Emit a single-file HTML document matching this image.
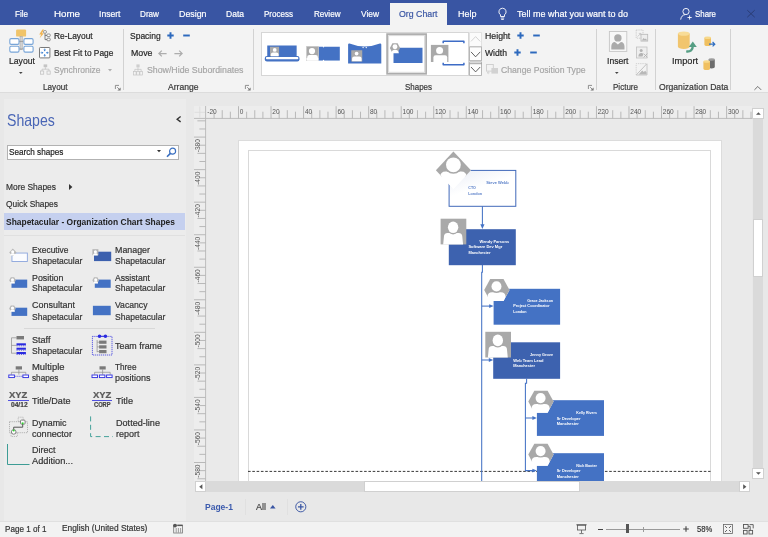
<!DOCTYPE html>
<html><head><meta charset="utf-8"><title>Visio</title>
<style>
html,body{margin:0;padding:0;}
body{width:768px;height:537px;overflow:hidden;position:relative;background:#e8e8e8;font-family:"Liberation Sans",sans-serif;}
.t{position:absolute;white-space:nowrap;font-family:"Liberation Sans",sans-serif;-webkit-text-stroke:0.2px;}
.a{position:absolute;}
svg{position:absolute;overflow:visible;}
</style></head><body>
<div id="root" style="position:absolute;left:0;top:0;width:768px;height:537px;will-change:transform;">

<div class="a" style="left:0;top:0;width:768px;height:25px;background:#3955a3;"></div>
<div class="a" style="left:390px;top:3px;width:57px;height:22px;background:#f3f3f3;"></div>
<span class="t " style="left:15.00px;top:7.80px;font-size:9.5px;line-height:11.40px;color:#ffffff;font-weight:normal;transform:scaleX(0.8493);transform-origin:0 0;">File</span>
<span class="t " style="left:54.00px;top:7.80px;font-size:9.5px;line-height:11.40px;color:#ffffff;font-weight:normal;transform:scaleX(1.0261);transform-origin:0 0;">Home</span>
<span class="t " style="left:98.50px;top:7.80px;font-size:9.5px;line-height:11.40px;color:#ffffff;font-weight:normal;transform:scaleX(0.9050);transform-origin:0 0;">Insert</span>
<span class="t " style="left:140.00px;top:7.80px;font-size:9.5px;line-height:11.40px;color:#ffffff;font-weight:normal;transform:scaleX(0.8571);transform-origin:0 0;">Draw</span>
<span class="t " style="left:179.00px;top:7.80px;font-size:9.5px;line-height:11.40px;color:#ffffff;font-weight:normal;transform:scaleX(0.9300);transform-origin:0 0;">Design</span>
<span class="t " style="left:226.00px;top:7.80px;font-size:9.5px;line-height:11.40px;color:#ffffff;font-weight:normal;transform:scaleX(0.8970);transform-origin:0 0;">Data</span>
<span class="t " style="left:264.00px;top:7.80px;font-size:9.5px;line-height:11.40px;color:#ffffff;font-weight:normal;transform:scaleX(0.8451);transform-origin:0 0;">Process</span>
<span class="t " style="left:313.50px;top:7.80px;font-size:9.5px;line-height:11.40px;color:#ffffff;font-weight:normal;transform:scaleX(0.8508);transform-origin:0 0;">Review</span>
<span class="t " style="left:361.00px;top:7.80px;font-size:9.5px;line-height:11.40px;color:#ffffff;font-weight:normal;transform:scaleX(0.8815);transform-origin:0 0;">View</span>
<span class="t " style="left:399.00px;top:7.80px;font-size:9.5px;line-height:11.40px;color:#3955a3;font-weight:normal;transform:scaleX(0.9232);transform-origin:0 0;">Org Chart</span>
<span class="t " style="left:457.50px;top:7.80px;font-size:9.5px;line-height:11.40px;color:#ffffff;font-weight:normal;transform:scaleX(0.9469);transform-origin:0 0;">Help</span>
<span class="t " style="left:517.00px;top:7.80px;font-size:9.5px;line-height:11.40px;color:#ffffff;font-weight:normal;transform:scaleX(0.9469);transform-origin:0 0;">Tell me what you want to do</span>
<span class="t " style="left:695.00px;top:7.80px;font-size:9.5px;line-height:11.40px;color:#ffffff;font-weight:normal;transform:scaleX(0.8284);transform-origin:0 0;">Share</span>
<svg style="left:497.3px;top:6.9px" width="11" height="15" viewBox="0 0 11 15"><path d="M5.5 1.2a3.6 3.6 0 0 0-2 6.6v1.7h4V7.8a3.6 3.6 0 0 0-2-6.6z" fill="none" stroke="#fff" stroke-width="0.9"/><path d="M3.8 11h3.4M4.2 12.4h2.6" stroke="#fff" stroke-width="0.9"/></svg>
<svg style="left:679px;top:7px" width="13" height="13" viewBox="0 0 13 13"><circle cx="7" cy="4.5" r="3.1" fill="none" stroke="#fff" stroke-width="0.9"/><path d="M1.7 12.6c0.3-2.9 2-4.7 4.4-5" fill="none" stroke="#fff" stroke-width="0.9"/><path d="M10.6 8.4v4.2M8.5 10.5h4.2" stroke="#fff" stroke-width="0.9"/></svg>
<svg style="left:746.7px;top:10px" width="8" height="7.4" viewBox="0 0 8 7.4"><path d="M0.3 0.2l7.4 7M7.7 0.2l-7.4 7" stroke="#2a3c74" stroke-width="1"/></svg>
<div class="a" style="left:0;top:25px;width:768px;height:68.4px;background:#f3f3f3;border-bottom:1px solid #dcdcdc;box-sizing:border-box;"></div>
<div class="a" style="left:122.5px;top:29px;width:1px;height:61px;background:#d2d2d2;"></div>
<div class="a" style="left:252.5px;top:29px;width:1px;height:61px;background:#d2d2d2;"></div>
<div class="a" style="left:596.0px;top:29px;width:1px;height:61px;background:#d2d2d2;"></div>
<div class="a" style="left:655.0px;top:29px;width:1px;height:61px;background:#d2d2d2;"></div>
<div class="a" style="left:729.5px;top:29px;width:1px;height:61px;background:#d2d2d2;"></div>
<svg style="left:8px;top:28px" width="27" height="26" viewBox="0 0 27 26"><rect x="8.1" y="1.4" width="10" height="7.2" rx="1.2" fill="#f0c46a"/><rect x="12.0" y="8.6" width="2.2" height="12.8" fill="#d4d4d4" stroke="#9a9a9a" stroke-width="0.5"/><path d="M11 13.4h4.4M11 21h4.4" stroke="#8a8a8a" stroke-width="0.7" fill="none"/><rect x="1.8" y="10.6" width="9.2" height="5.8" rx="1.3" fill="#fff" stroke="#78a5d8" stroke-width="1.1"/><rect x="15.9" y="10.6" width="9.2" height="5.8" rx="1.3" fill="#fff" stroke="#78a5d8" stroke-width="1.1"/><rect x="1.8" y="18.3" width="9.2" height="5.8" rx="1.3" fill="#fff" stroke="#78a5d8" stroke-width="1.1"/><rect x="15.9" y="18.3" width="9.2" height="5.8" rx="1.3" fill="#fff" stroke="#78a5d8" stroke-width="1.1"/></svg>
<span class="t " style="left:8.60px;top:55.02px;font-size:9.8px;line-height:11.76px;color:#262626;font-weight:normal;transform:scaleX(0.8803);transform-origin:0 0;">Layout</span>
<svg style="left:19.2px;top:71.6px" width="3.6" height="2.2"><path d="M0 0h3.6l-1.8 2.1z" fill="#444"/></svg>
<svg style="left:39px;top:30px" width="12" height="12" viewBox="0 0 12 12"><path d="M3.4 -0.6L0.2 4.6h2L0.6 8.2 5 3.2H3L5 -0.6z" fill="#f2b552"/><path d="M6 3.4v6.2h2M6 5.4h2" stroke="#666" stroke-width="0.8" fill="none"/><rect x="4.6" y="0.6" width="2.8" height="2.6" rx="1" fill="#fff" stroke="#666" stroke-width="0.7"/><rect x="8" y="4" width="3.2" height="2.6" rx="0.8" fill="#fff" stroke="#666" stroke-width="0.7"/><rect x="8" y="8.2" width="3.2" height="2.6" rx="0.8" fill="#fff" stroke="#666" stroke-width="0.7"/></svg>
<span class="t " style="left:53.75px;top:30.30px;font-size:9.5px;line-height:11.40px;color:#262626;font-weight:normal;transform:scaleX(0.8830);transform-origin:0 0;">Re-Layout</span>
<svg style="left:39px;top:46.5px" width="11.4" height="11.4" viewBox="0 0 11.4 11.4"><rect x="0.5" y="0.5" width="10.4" height="10.4" rx="0.8" fill="#fff" stroke="#6a6a6a" stroke-width="0.9"/><path d="M5.7 1.4v2.6M5.7 10v-2.6M1.4 5.7h2.6M10 5.7H7.4" stroke="#6aa2dc" stroke-width="0.7"/><path d="M4.5 2.6h2.4L5.7 4.5zM4.5 8.8h2.4L5.7 6.9zM2.6 4.5v2.4L4.5 5.7zM8.8 4.5v2.4L6.9 5.7z" fill="#3b7fd0"/></svg>
<span class="t " style="left:53.75px;top:47.30px;font-size:9.5px;line-height:11.40px;color:#262626;font-weight:normal;transform:scaleX(0.8774);transform-origin:0 0;">Best Fit to Page</span>
<svg style="left:39.5px;top:64px" width="11" height="11" viewBox="0 0 11 11"><rect x="3.6" y="0.4" width="3.6" height="2.8" fill="#c4c4c4"/><path d="M5.4 3.2v2M2 7V5.2h7V7" stroke="#c4c4c4" stroke-width="0.8" fill="none"/><rect x="0.5" y="7" width="3.2" height="3.2" fill="none" stroke="#c4c4c4" stroke-width="0.8"/><rect x="7" y="7" width="3.2" height="3.2" fill="none" stroke="#c4c4c4" stroke-width="0.8"/></svg>
<span class="t " style="left:53.75px;top:64.30px;font-size:9.5px;line-height:11.40px;color:#a6a6a6;font-weight:normal;transform:scaleX(0.8895);transform-origin:0 0;">Synchronize</span>
<svg style="left:107.5px;top:69px" width="4" height="3"><path d="M0 0h4l-2 2.5z" fill="#b0b0b0"/></svg>
<span class="t " style="left:43.00px;top:81.60px;font-size:9px;line-height:10.80px;color:#383838;font-weight:normal;transform:scaleX(0.9067);transform-origin:0 0;">Layout</span>
<svg style="left:115px;top:85px" width="6" height="6" viewBox="0 0 6 6"><path d="M0.4 4V0.4H4" stroke="#777" stroke-width="0.8" fill="none"/><path d="M5.6 2.4v3.2H2.4z" fill="#777"/><path d="M2.2 2.2l2.6 2.6" stroke="#777" stroke-width="0.8"/></svg>
<span class="t " style="left:130.00px;top:30.30px;font-size:9.5px;line-height:11.40px;color:#262626;font-weight:normal;transform:scaleX(0.8943);transform-origin:0 0;">Spacing</span>
<svg style="left:167px;top:32.1px" width="7" height="7" viewBox="0 0 7 7"><path d="M3.5 0.3v6.4M0.3 3.5h6.4" stroke="#2d69bd" stroke-width="1.95"/></svg>
<svg style="left:183px;top:32.1px" width="7" height="7" viewBox="0 0 7 7"><path d="M0.2 3.5h6.6" stroke="#2d69bd" stroke-width="1.95"/></svg>
<span class="t " style="left:130.50px;top:47.30px;font-size:9.5px;line-height:11.40px;color:#262626;font-weight:normal;transform:scaleX(0.9256);transform-origin:0 0;">Move</span>
<svg style="left:157.5px;top:49.5px" width="9" height="7" viewBox="0 0 9 7"><path d="M8.6 3.5H1M3.8 0.6L0.9 3.5l2.9 2.9" stroke="#adadad" stroke-width="1.25" fill="none"/></svg>
<svg style="left:174px;top:49.5px" width="9" height="7" viewBox="0 0 9 7"><path d="M0.4 3.5H8M5.2 0.6l2.9 2.9-2.9 2.9" stroke="#adadad" stroke-width="1.25" fill="none"/></svg>
<svg style="left:132.5px;top:63.5px" width="10" height="12" viewBox="0 0 10 12"><rect x="3.4" y="0.4" width="3.2" height="3" fill="#cfcfcf"/><path d="M5 3.4v2M1.8 7.4V5.4h6.4v2M5 5.4v2" stroke="#c4c4c4" stroke-width="0.7" fill="none"/><rect x="0.5" y="7.4" width="2.6" height="3.6" fill="none" stroke="#c4c4c4" stroke-width="0.7"/><rect x="3.7" y="7.4" width="2.6" height="3.6" fill="none" stroke="#c4c4c4" stroke-width="0.7"/><rect x="6.9" y="7.4" width="2.6" height="3.6" fill="none" stroke="#c4c4c4" stroke-width="0.7"/></svg>
<span class="t " style="left:146.50px;top:64.30px;font-size:9.5px;line-height:11.40px;color:#a6a6a6;font-weight:normal;transform:scaleX(0.9229);transform-origin:0 0;">Show/Hide Subordinates</span>
<span class="t " style="left:167.50px;top:81.60px;font-size:9px;line-height:10.80px;color:#383838;font-weight:normal;transform:scaleX(0.9526);transform-origin:0 0;">Arrange</span>
<svg style="left:245px;top:85px" width="6" height="6" viewBox="0 0 6 6"><path d="M0.4 4V0.4H4" stroke="#777" stroke-width="0.8" fill="none"/><path d="M5.6 2.4v3.2H2.4z" fill="#777"/><path d="M2.2 2.2l2.6 2.6" stroke="#777" stroke-width="0.8"/></svg>
<div class="a" style="left:260.8px;top:32px;width:208.6px;height:44px;background:#fff;border:1px solid #d6d6d6;box-sizing:border-box;"></div>
<svg style="left:256px;top:28px" width="230" height="52" viewBox="256 28 230 52"><rect x="267.25" y="45.5" width="29.4" height="10.8" fill="#4472c4"/><rect x="264.8" y="55.9" width="34.7" height="5.6" rx="2.2" fill="#4472c4"/><rect x="266" y="57" width="32.3" height="2.3" rx="0.8" fill="#fff"/><rect x="270" y="46.75" width="9.1" height="9.4" fill="#a9a9a9"/><circle cx="274.7" cy="49.9" r="1.9" fill="#fff"/><path d="M270.8 56.15V54.6Q270.8 52.4 273.0 52.4H276.40000000000003Q278.6 52.4 278.6 54.6V56.15z" fill="#fff"/><rect x="318.3" y="46.75" width="21.5" height="13.8" fill="#4472c4"/><rect x="306.6" y="46.5" width="11.9" height="14.25" fill="#fff" stroke="#cfcfcf" stroke-width="0.5"/><rect x="306.6" y="46.5" width="11.9" height="11.5" fill="#a9a9a9"/><circle cx="312" cy="51.1" r="3.1" fill="#fff"/><path d="M307.2 60.4V57.1Q307.2 54.9 309.4 54.9H315.7Q317.9 54.9 317.9 57.1V60.4z" fill="#fff"/><circle cx="323.5" cy="46.75" r="0.7" fill="#fff"/><circle cx="323.5" cy="60.4" r="0.7" fill="#fff"/><path d="M348.1 44.6Q348.1 43.2 349.5 43.4Q364.7 49.4 379.9 43.4Q381.3 43.2 381.3 44.6V63.6H348.1z" fill="#4472c4"/><rect x="351.25" y="50.25" width="11" height="11.25" fill="#a9a9a9"/><circle cx="356.6" cy="53.6" r="1.85" fill="#fff"/><path d="M352.1 61.2V58.800000000000004Q352.1 56.6 354.3 56.6H359.40000000000003Q361.6 56.6 361.6 58.800000000000004V61.2z" fill="#fff"/><circle cx="363.1" cy="47.5" r="0.65" fill="#fff"/><circle cx="366.25" cy="47.5" r="0.65" fill="#fff"/><rect x="387.1" y="34.1" width="39" height="39.7" fill="#fff" stroke="#acacac" stroke-width="1.7"/><rect x="388.6" y="35.6" width="36" height="36.7" fill="none" stroke="#dadada" stroke-width="1"/><rect x="393.5" y="47.75" width="29" height="15.25" fill="#4472c4"/><path d="M392.4 43.3h5.2l2.5 4.6-2.5 5H392.4l-2.5-5z" fill="#a9a9a9"/><circle cx="395" cy="46.8" r="2.45" fill="#fff"/><path d="M391.6 53.2c0-2.8 1.4-3.4 3.4-3.4s3.6 0.6 3.9 3.4z" fill="#fff"/><rect x="430.9" y="44.9" width="17.5" height="17.1" fill="#a9a9a9"/><circle cx="439.6" cy="50.5" r="3.5" fill="#fff"/><path d="M433.4 62.3V57.5Q433.4 55.3 435.59999999999997 55.3H445.0Q447.2 55.3 447.2 57.5V62.3z" fill="#fff"/><path d="M443.2 43.3v-2h20.7v2M443.2 62.8v2h20.7v-2" fill="none" stroke="#3d6cc6" stroke-width="1.5" stroke-linejoin="round"/><rect x="469.6" y="32.6" width="11.9" height="14" fill="#fbfbfb" stroke="#dcdcdc" stroke-width="0.8"/><rect x="469.6" y="46.9" width="11.9" height="13.8" fill="#fdfdfd" stroke="#a6a6a6" stroke-width="0.8"/><rect x="469.6" y="62" width="11.9" height="13.4" fill="#fdfdfd" stroke="#a6a6a6" stroke-width="0.8"/><path d="M471 41.4l4.6-4.8 4.6 4.8" stroke="#c9c9c9" stroke-width="0.8" fill="none"/><path d="M471 51.9l4.6 4.9 4.6-4.9" stroke="#444" stroke-width="0.85" fill="none"/><path d="M469.6 63.7h11.9" stroke="#8a8a8a" stroke-width="0.8"/><path d="M471 67l4.6 4.9 4.6-4.9" stroke="#444" stroke-width="0.85" fill="none"/></svg>
<span class="t " style="left:484.75px;top:30.30px;font-size:9.5px;line-height:11.40px;color:#262626;font-weight:normal;transform:scaleX(0.9214);transform-origin:0 0;">Height</span>
<svg style="left:516.5px;top:32.1px" width="7" height="7" viewBox="0 0 7 7"><path d="M3.5 0.3v6.4M0.3 3.5h6.4" stroke="#2d69bd" stroke-width="1.95"/></svg>
<svg style="left:533px;top:32.1px" width="7" height="7" viewBox="0 0 7 7"><path d="M0.2 3.5h6.6" stroke="#2d69bd" stroke-width="1.95"/></svg>
<span class="t " style="left:485.00px;top:47.30px;font-size:9.5px;line-height:11.40px;color:#262626;font-weight:normal;transform:scaleX(0.9060);transform-origin:0 0;">Width</span>
<svg style="left:513.5px;top:49.1px" width="7" height="7" viewBox="0 0 7 7"><path d="M3.5 0.3v6.4M0.3 3.5h6.4" stroke="#2d69bd" stroke-width="1.95"/></svg>
<svg style="left:530px;top:49.1px" width="7" height="7" viewBox="0 0 7 7"><path d="M0.2 3.5h6.6" stroke="#2d69bd" stroke-width="1.95"/></svg>
<svg style="left:486px;top:64px" width="13" height="11" viewBox="0 0 13 11"><rect x="0.5" y="0.5" width="6.8" height="6.6" fill="none" stroke="#cdcdcd" stroke-width="0.9"/><rect x="5.4" y="4" width="6.6" height="5.6" fill="#d2d2d2"/><path d="M3.6 8.8H1.4M2.6 7.8l-1.2 1 1.2 1" stroke="#c8c8c8" stroke-width="0.7" fill="none"/></svg>
<span class="t " style="left:501.00px;top:64.30px;font-size:9.5px;line-height:11.40px;color:#a6a6a6;font-weight:normal;transform:scaleX(0.9108);transform-origin:0 0;">Change Position Type</span>
<span class="t " style="left:405.00px;top:81.60px;font-size:9px;line-height:10.80px;color:#383838;font-weight:normal;transform:scaleX(0.8846);transform-origin:0 0;">Shapes</span>
<svg style="left:588px;top:85px" width="6" height="6" viewBox="0 0 6 6"><path d="M0.4 4V0.4H4" stroke="#777" stroke-width="0.8" fill="none"/><path d="M5.6 2.4v3.2H2.4z" fill="#777"/><path d="M2.2 2.2l2.6 2.6" stroke="#777" stroke-width="0.8"/></svg>
<svg style="left:608px;top:30px" width="21" height="23" viewBox="608 30 21 23"><rect x="609.4" y="31.5" width="17.4" height="19.9" fill="#f7f7f7" stroke="#c6c6c6" stroke-width="0.9"/><circle cx="617.9" cy="37.9" r="3.7" fill="#ababab"/><path d="M611.3 49.6v-3.2c0-2.6 1.4-4.3 3.6-4.4l3 2.4 3-2.4c2.2 0.1 3.6 1.8 3.6 4.4v3.2z" fill="#ababab"/></svg>
<span class="t " style="left:606.50px;top:55.02px;font-size:9.8px;line-height:11.76px;color:#262626;font-weight:normal;transform:scaleX(0.8773);transform-origin:0 0;">Insert</span>
<svg style="left:615.4px;top:71.6px" width="3.6" height="2.2"><path d="M0 0h3.6l-1.8 2.1z" fill="#444"/></svg>
<svg style="left:634px;top:28px" width="16" height="50" viewBox="634 28 16 50"><rect x="636.2" y="30" width="6.8" height="8.2" fill="none" stroke="#bdbdbd" stroke-width="0.7" stroke-dasharray="1.3 0.9"/><path d="M637.6 36.6l3-3M640.8 35.4v-2h-2" stroke="#bdbdbd" stroke-width="0.7" fill="none"/><rect x="641" y="34.3" width="6.7" height="6.8" fill="#ededed" stroke="#b8b8b8" stroke-width="0.8"/><path d="M641.8 40.4l1.8-2.4 1.3 1.3 1-0.9 1.3 2z" fill="#b4b4b4"/><rect x="636.4" y="47" width="10.6" height="11" fill="#eeeeee" stroke="#c0c0c0" stroke-width="0.8"/><circle cx="641.2" cy="50.4" r="1.5" fill="#b4b4b4"/><path d="M638.4 56.6c0-2.6 1.2-3.6 2.8-3.6 1 0 1.8 0.4 2.2 1.2l-1 2.4z" fill="#b4b4b4"/><path d="M643.6 53.6l3.8 3.8M647.4 53.6l-3.8 3.8" stroke="#adadad" stroke-width="0.8"/><path d="M636.2 75V63.6H647" fill="none" stroke="#c4c4c4" stroke-width="0.7" stroke-dasharray="1.3 0.9"/><path d="M647 63.6V75H636.2" fill="none" stroke="#bdbdbd" stroke-width="0.8"/><path d="M636.6 74.6L646.6 64" stroke="#b4b4b4" stroke-width="0.8"/><path d="M638.6 74.4l3.6-3.8 1.6 1.4 1.4-1.2 1.4 1.6v2z" fill="#b8b8b8"/></svg>
<span class="t " style="left:613.00px;top:81.60px;font-size:9px;line-height:10.80px;color:#383838;font-weight:normal;transform:scaleX(0.8925);transform-origin:0 0;">Picture</span>
<svg style="left:677px;top:31px" width="21" height="23" viewBox="0 0 21 23"><path d="M0.9 2.6v13.200000000000001a5.9 2.2 0 0 0 11.8 0v-13.200000000000001z" fill="#f1c56e"/><ellipse cx="6.800000000000001" cy="2.6" rx="5.9" ry="2.2" fill="#f8dc98"/><path d="M9.2 20.4c4.2 0.6 6.6-1.6 6.6-5.6" stroke="#559e84" stroke-width="2.4" fill="none"/><path d="M11.8 16l4-5.6 4 5.6z" fill="#559e84"/></svg>
<span class="t " style="left:672.00px;top:55.02px;font-size:9.8px;line-height:11.76px;color:#262626;font-weight:normal;transform:scaleX(0.9362);transform-origin:0 0;">Import</span>
<svg style="left:703.5px;top:36px" width="12" height="12" viewBox="0 0 12 12"><path d="M0.4 1.7000000000000002v7.0a3.3 1.3 0 0 0 6.6 0v-7.0z" fill="#f0c060"/><ellipse cx="3.6999999999999997" cy="1.7000000000000002" rx="3.3" ry="1.3" fill="#f7d98c"/><path d="M5 8.2h5.6M8.6 6l2.2 2.2-2.2 2.2" stroke="#2f6ec0" stroke-width="1.2" fill="none"/></svg>
<svg style="left:703px;top:58px" width="12" height="13" viewBox="0 0 12 13"><path d="M5.6 1.5v7.6a3.1 1.3 0 0 0 6.2 0v-7.6z" fill="#6c6c6c"/><ellipse cx="8.7" cy="1.5" rx="3.1" ry="1.3" fill="#9c9c9c"/><path d="M0.4 3.5v7.200000000000001a3.3 1.3 0 0 0 6.6 0v-7.200000000000001z" fill="#f0c060"/><ellipse cx="3.6999999999999997" cy="3.5" rx="3.3" ry="1.3" fill="#f7d98c"/></svg>
<span class="t " style="left:658.50px;top:81.60px;font-size:9px;line-height:10.80px;color:#383838;font-weight:normal;transform:scaleX(0.9554);transform-origin:0 0;">Organization Data</span>
<svg style="left:754.3px;top:86px" width="7.6" height="4.2" viewBox="0 0 9 5"><path d="M0.5 4.6l4-4 4 4" stroke="#555" stroke-width="1" fill="none"/></svg>
<div class="a" style="left:4px;top:99px;width:182px;height:422px;background:#ececec;"></div>
<span class="t " style="left:7.20px;top:110.60px;font-size:16.5px;line-height:19.80px;color:#4a66b6;font-weight:normal;-webkit-text-stroke:0;transform:scaleX(0.8542);transform-origin:0 0;">Shapes</span>
<svg style="left:175.9px;top:115.8px" width="5.6" height="6.4" viewBox="0 0 6 7"><path d="M5 0.6L1.2 3.5 5 6.4" stroke="#333" stroke-width="1.5" fill="none"/></svg>
<div class="a" style="left:7px;top:145px;width:172px;height:15px;box-sizing:border-box;border:1px solid #b2b2b2;background:#fff;"></div>
<span class="t " style="left:8.50px;top:146.78px;font-size:9.2px;line-height:11.04px;color:#222;font-weight:normal;transform:scaleX(0.8881);transform-origin:0 0;">Search shapes</span>
<svg style="left:156.5px;top:150.1px" width="5" height="3"><path d="M0 0h4l-2 2.3z" fill="#333"/></svg>
<svg style="left:166.2px;top:146.6px" width="11" height="11" viewBox="0 0 11 11"><circle cx="6.6" cy="4.2" r="3" fill="none" stroke="#3a6fc0" stroke-width="1.2"/><path d="M4.4 6.4L1 9.8" stroke="#3a6fc0" stroke-width="1.6"/></svg>
<span class="t " style="left:6.00px;top:181.68px;font-size:9.2px;line-height:11.04px;color:#333;font-weight:normal;transform:scaleX(0.9138);transform-origin:0 0;">More Shapes</span>
<svg style="left:68.5px;top:183.5px" width="4" height="6"><path d="M0 0l3.4 3L0 6z" fill="#333"/></svg>
<span class="t " style="left:6.00px;top:199.28px;font-size:9.2px;line-height:11.04px;color:#333;font-weight:normal;transform:scaleX(0.9079);transform-origin:0 0;">Quick Shapes</span>
<div class="a" style="left:4.4px;top:213px;width:181px;height:17px;background:#c5d0ef;"></div>
<span class="t " style="left:6.00px;top:216.58px;font-size:9.2px;line-height:11.04px;color:#222;font-weight:bold;-webkit-text-stroke:0;transform:scaleX(0.9194);transform-origin:0 0;">Shapetacular - Organization Chart Shapes</span>
<div class="a" style="left:4px;top:235px;width:181px;height:1px;background:#e0e0e0;"></div>
<div class="a" style="left:24px;top:327.5px;width:131px;height:1px;background:#d8d8d8;"></div>
<span class="t " style="left:32.00px;top:245.43px;font-size:9.2px;line-height:11.04px;color:#333;font-weight:normal;transform:scaleX(0.9151);transform-origin:0 0;">Executive</span><span class="t " style="left:32.00px;top:256.03px;font-size:9.2px;line-height:11.04px;color:#333;font-weight:normal;transform:scaleX(0.9278);transform-origin:0 0;">Shapetacular</span>
<span class="t " style="left:115.40px;top:245.43px;font-size:9.2px;line-height:11.04px;color:#333;font-weight:normal;transform:scaleX(0.9640);transform-origin:0 0;">Manager</span><span class="t " style="left:115.40px;top:256.03px;font-size:9.2px;line-height:11.04px;color:#333;font-weight:normal;transform:scaleX(0.9278);transform-origin:0 0;">Shapetacular</span>
<span class="t " style="left:32.00px;top:272.53px;font-size:9.2px;line-height:11.04px;color:#333;font-weight:normal;transform:scaleX(0.9624);transform-origin:0 0;">Position</span><span class="t " style="left:32.00px;top:283.33px;font-size:9.2px;line-height:11.04px;color:#333;font-weight:normal;transform:scaleX(0.9278);transform-origin:0 0;">Shapetacular</span>
<span class="t " style="left:115.40px;top:272.53px;font-size:9.2px;line-height:11.04px;color:#333;font-weight:normal;transform:scaleX(0.9377);transform-origin:0 0;">Assistant</span><span class="t " style="left:115.40px;top:283.33px;font-size:9.2px;line-height:11.04px;color:#333;font-weight:normal;transform:scaleX(0.9278);transform-origin:0 0;">Shapetacular</span>
<span class="t " style="left:32.00px;top:300.43px;font-size:9.2px;line-height:11.04px;color:#333;font-weight:normal;transform:scaleX(0.9777);transform-origin:0 0;">Consultant</span><span class="t " style="left:32.00px;top:311.63px;font-size:9.2px;line-height:11.04px;color:#333;font-weight:normal;transform:scaleX(0.9278);transform-origin:0 0;">Shapetacular</span>
<span class="t " style="left:115.40px;top:300.43px;font-size:9.2px;line-height:11.04px;color:#333;font-weight:normal;transform:scaleX(0.9393);transform-origin:0 0;">Vacancy</span><span class="t " style="left:115.40px;top:311.63px;font-size:9.2px;line-height:11.04px;color:#333;font-weight:normal;transform:scaleX(0.9278);transform-origin:0 0;">Shapetacular</span>
<span class="t " style="left:32.00px;top:334.83px;font-size:9.2px;line-height:11.04px;color:#333;font-weight:normal;transform:scaleX(0.9865);transform-origin:0 0;">Staff</span><span class="t " style="left:32.00px;top:345.63px;font-size:9.2px;line-height:11.04px;color:#333;font-weight:normal;transform:scaleX(0.9278);transform-origin:0 0;">Shapetacular</span>
<span class="t " style="left:115.40px;top:341.03px;font-size:9.2px;line-height:11.04px;color:#333;font-weight:normal;transform:scaleX(0.9678);transform-origin:0 0;">Team frame</span>
<span class="t " style="left:32.00px;top:362.03px;font-size:9.2px;line-height:11.04px;color:#333;font-weight:normal;transform:scaleX(1.0252);transform-origin:0 0;">Multiple</span><span class="t " style="left:32.00px;top:373.03px;font-size:9.2px;line-height:11.04px;color:#333;font-weight:normal;transform:scaleX(0.8933);transform-origin:0 0;">shapes</span>
<span class="t " style="left:115.40px;top:362.03px;font-size:9.2px;line-height:11.04px;color:#333;font-weight:normal;transform:scaleX(0.8947);transform-origin:0 0;">Three</span><span class="t " style="left:115.40px;top:373.03px;font-size:9.2px;line-height:11.04px;color:#333;font-weight:normal;transform:scaleX(0.9777);transform-origin:0 0;">positions</span>
<span class="t " style="left:32.00px;top:395.68px;font-size:9.2px;line-height:11.04px;color:#333;font-weight:normal;transform:scaleX(0.9865);transform-origin:0 0;">Title/Date</span>
<span class="t " style="left:116.00px;top:395.68px;font-size:9.2px;line-height:11.04px;color:#333;font-weight:normal;transform:scaleX(0.9977);transform-origin:0 0;">Title</span>
<span class="t " style="left:32.00px;top:418.43px;font-size:9.2px;line-height:11.04px;color:#333;font-weight:normal;transform:scaleX(0.9641);transform-origin:0 0;">Dynamic</span><span class="t " style="left:32.00px;top:428.53px;font-size:9.2px;line-height:11.04px;color:#333;font-weight:normal;transform:scaleX(0.9901);transform-origin:0 0;">connector</span>
<span class="t " style="left:116.00px;top:418.43px;font-size:9.2px;line-height:11.04px;color:#333;font-weight:normal;transform:scaleX(0.9890);transform-origin:0 0;">Dotted-line</span><span class="t " style="left:116.00px;top:428.53px;font-size:9.2px;line-height:11.04px;color:#333;font-weight:normal;transform:scaleX(0.9779);transform-origin:0 0;">report</span>
<span class="t " style="left:32.00px;top:444.63px;font-size:9.2px;line-height:11.04px;color:#333;font-weight:normal;transform:scaleX(0.9782);transform-origin:0 0;">Direct</span><span class="t " style="left:32.00px;top:456.03px;font-size:9.2px;line-height:11.04px;color:#333;font-weight:normal;transform:scaleX(1.0021);transform-origin:0 0;">Addition...</span>
<svg style="left:0;top:0" width="190" height="330" viewBox="0 0 190 330"><rect x="11.95" y="253.04999999999998" width="15.4" height="8.399999999999983" fill="#fbfcff" stroke="#8ba5dc" stroke-width="0.9"/><path d="M12.8 248.6L16.6 252.6L12.8 256.2L9.2 252.6z" fill="#b8b8b8"/><circle cx="12.7" cy="251.79999999999998" r="1.55" fill="#fff"/><path d="M10.299999999999999 255.6c0-2 1-2.4 2.4-2.4s2.4 0.4 2.4 2.4z" fill="#fff"/></svg>
<svg style="left:0;top:0" width="190" height="330" viewBox="0 0 190 330"><rect x="94" y="251.7" width="17.200000000000003" height="9.400000000000034" fill="#3c60ae"/><rect x="92.4" y="249.2" width="6" height="6" fill="#b4b4b4"/><circle cx="95.4" cy="251.79999999999998" r="1.55" fill="#fff"/><path d="M93.0 255.6c0-2 1-2.4 2.4-2.4s2.4 0.4 2.4 2.4z" fill="#fff"/></svg>
<svg style="left:0;top:0" width="190" height="330" viewBox="0 0 190 330"><rect x="11.5" y="279.6" width="15.7" height="8.199999999999989" fill="#4472c4"/><path d="M10.8 277.2h3.4l1.6 3-1.6 3h-3.4l-1.6-3z" fill="#b8b8b8"/><circle cx="12.5" cy="279.8" r="1.55" fill="#fff"/><path d="M10.1 283.59999999999997c0-2 1-2.4 2.4-2.4s2.4 0.4 2.4 2.4z" fill="#fff"/></svg>
<svg style="left:0;top:0" width="190" height="330" viewBox="0 0 190 330"><rect x="94.8" y="279.6" width="15.900000000000006" height="8.199999999999989" fill="#4472c4"/><path d="M94.0 277.2h3.4l1.6 3-1.6 3h-3.4l-1.6-3z" fill="#b8b8b8"/><circle cx="95.69999999999999" cy="279.8" r="1.55" fill="#fff"/><path d="M93.29999999999998 283.59999999999997c0-2 1-2.4 2.4-2.4s2.4 0.4 2.4 2.4z" fill="#fff"/></svg>
<svg style="left:0;top:0" width="190" height="330" viewBox="0 0 190 330"><rect x="11.5" y="307.7" width="15.7" height="8.199999999999989" fill="#4472c4"/><path d="M10.8 305.4h3.4l1.6 3-1.6 3h-3.4l-1.6-3z" fill="#b8b8b8"/><circle cx="12.5" cy="308.0" r="1.55" fill="#fff"/><path d="M10.1 311.79999999999995c0-2 1-2.4 2.4-2.4s2.4 0.4 2.4 2.4z" fill="#fff"/></svg>
<svg style="left:0;top:0" width="190" height="330" viewBox="0 0 190 330"><rect x="92.9" y="305.8" width="17.799999999999997" height="9.399999999999977" fill="#4472c4"/></svg>
<svg style="left:0;top:330px" width="190" height="90" viewBox="0 330 190 90"><path d="M11.5 337.8V353.4M11.5 337.8h5M11.5 345.4h5M11.5 353.2h5" stroke="#8c8c8c" stroke-width="0.7" fill="none"/><rect x="16.5" y="336" width="7.5" height="3.4" fill="#7a7a7a"/><rect x="16.5" y="343.3" width="9.4" height="2" fill="#2a2ae0"/><path d="M16.5 345.8h9.4" stroke="#2a2ae0" stroke-width="0.7" stroke-dasharray="1.2 1"/><rect x="16.5" y="347.7" width="9.4" height="2" fill="#2a2ae0"/><path d="M16.5 350.2h9.4" stroke="#2a2ae0" stroke-width="0.7" stroke-dasharray="1.2 1"/><rect x="16.5" y="352.0" width="9.4" height="2" fill="#2a2ae0"/><path d="M16.5 354.5h9.4" stroke="#2a2ae0" stroke-width="0.7" stroke-dasharray="1.2 1"/><rect x="92.4" y="336.4" width="19.6" height="18.6" fill="none" stroke="#2a2ae0" stroke-width="0.9" stroke-dasharray="1 1"/><path d="M99.5 336.3h6" stroke="#2a2ae0" stroke-width="0.9"/><circle cx="99.5" cy="336.3" r="1.8" fill="#2a2ae0"/><circle cx="105.4" cy="336.3" r="1.8" fill="#2a2ae0"/><path d="M97.1 340v12.2M97.1 342.2h2M97.1 346.9h2M97.1 351.6h2" stroke="#8c8c8c" stroke-width="0.7" fill="none"/><rect x="99.1" y="340.6" width="7.4" height="3.2" fill="#7a7a7a"/><rect x="99.1" y="345.3" width="7.4" height="3.2" fill="#7a7a7a"/><rect x="99.1" y="350.0" width="7.4" height="3.2" fill="#7a7a7a"/><rect x="15.7" y="366.3" width="6.3" height="3.2" fill="#7a7a7a"/><path d="M18.9 369.4v5.2M11.4 374.6v-2.3h14.4v2.3" stroke="#8c8c8c" stroke-width="0.7" fill="none"/><rect x="8.8" y="375" width="5.6" height="2.6" fill="#fff" stroke="#2a2ae0" stroke-width="0.9"/><rect x="22.9" y="375" width="5.6" height="2.6" fill="#fff" stroke="#2a2ae0" stroke-width="0.9"/><path d="M15.4 376.3h7" stroke="#2a2ae0" stroke-width="0.8" stroke-dasharray="1 1"/><rect x="99.5" y="366.3" width="6.2" height="3.2" fill="#7a7a7a"/><path d="M102.6 369.4v5.2M94.6 374.6v-2.3h15.6v2.3" stroke="#8c8c8c" stroke-width="0.7" fill="none"/><rect x="92.0" y="375" width="5.5" height="2.6" fill="#fff" stroke="#2a2ae0" stroke-width="0.9"/><rect x="99.4" y="375" width="5.5" height="2.6" fill="#fff" stroke="#2a2ae0" stroke-width="0.9"/><rect x="106.6" y="375" width="5.5" height="2.6" fill="#fff" stroke="#2a2ae0" stroke-width="0.9"/></svg>
<span class="t " style="left:9.40px;top:390.34px;font-size:8.6px;line-height:10.32px;color:#5a5a5a;font-weight:bold;transform:scaleX(1.1001);transform-origin:0 0;">XYZ</span><div class="a" style="left:8.4px;top:399.6px;width:20.4px;height:1.2px;background:#5252e0;"></div><span class="t " style="left:10.60px;top:401.16px;font-size:6.4px;line-height:7.68px;color:#444;font-weight:bold;transform:scaleX(1.0366);transform-origin:0 0;">04/12</span>
<span class="t " style="left:92.80px;top:390.34px;font-size:8.6px;line-height:10.32px;color:#5a5a5a;font-weight:bold;transform:scaleX(1.1001);transform-origin:0 0;">XYZ</span><div class="a" style="left:91.80000000000001px;top:399.6px;width:20.4px;height:1.2px;background:#5252e0;"></div><span class="t " style="left:94.00px;top:401.16px;font-size:6.4px;line-height:7.68px;color:#444;font-weight:bold;transform:scaleX(0.8977);transform-origin:0 0;">CORP</span>
<svg style="left:8px;top:416px" width="22" height="22" viewBox="0 0 22 22"><rect x="1.5" y="5.7" width="18" height="11" fill="none" stroke="#8e8e8e" stroke-width="0.6" stroke-dasharray="1.2 0.9"/><rect x="10.2" y="1.2" width="5" height="4.5" fill="none" stroke="#9a9a9a" stroke-width="0.6" stroke-dasharray="1.2 0.9"/><rect x="3" y="16.7" width="6.4" height="3.8" fill="none" stroke="#9a9a9a" stroke-width="0.6" stroke-dasharray="1.2 0.9"/><path d="M5.7 14V11.2H14.7V8" stroke="#555" stroke-width="1" fill="none"/><rect x="12.5" y="4.1" width="4.6" height="4" rx="0.9" fill="#fff" stroke="#666" stroke-width="0.8"/><rect x="13.7" y="6.4" width="1.8" height="1.8" fill="#2fd62f"/><circle cx="5.7" cy="15.9" r="2.3" fill="#fff" stroke="#666" stroke-width="0.8"/><circle cx="5.7" cy="14.6" r="1" fill="#2fd62f"/></svg>
<svg style="left:90.2px;top:416px" width="24" height="22" viewBox="0 0 24 22"><path d="M0.6 0.4V20.6H23" stroke="#45a29a" stroke-width="1" stroke-dasharray="5 3.4" fill="none"/></svg>
<svg style="left:7px;top:444px" width="24" height="22" viewBox="0 0 24 22"><path d="M0.5 0v20.5H22.5" stroke="#3d9c95" stroke-width="1" fill="none"/></svg>
<div class="a" style="left:0;top:520.6px;width:768px;height:17px;background:#f2f2f2;border-top:1px solid #e0e0e0;box-sizing:border-box;"></div>
<span class="t " style="left:5.30px;top:523.72px;font-size:8.8px;line-height:10.56px;color:#333;font-weight:normal;transform:scaleX(0.9220);transform-origin:0 0;">Page 1 of 1</span>
<span class="t " style="left:62.30px;top:523.32px;font-size:8.8px;line-height:10.56px;color:#333;font-weight:normal;transform:scaleX(0.9490);transform-origin:0 0;">English (United States)</span>
<svg style="left:172px;top:523px" width="12" height="11" viewBox="172 523 12 11"><rect x="173.7" y="525.2" width="8.8" height="7.8" fill="#f2f2f2" stroke="#777" stroke-width="0.8"/><path d="M177.4 525.4h5.2" stroke="#555" stroke-width="1.4"/><path d="M176.2 528v4.6M178.4 528v4.6M180.6 528v4.6" stroke="#777" stroke-width="0.7"/><circle cx="175" cy="525.6" r="1.9" fill="#555"/></svg>
<svg style="left:575.5px;top:524px" width="11" height="11" viewBox="0 0 11 11"><path d="M0.4 0.8h10.2" stroke="#555" stroke-width="1"/><rect x="1.4" y="1.2" width="8.2" height="4.8" fill="none" stroke="#555" stroke-width="0.8"/><path d="M5.5 6v3M3.4 9.6h4.2" stroke="#555" stroke-width="0.8"/></svg>
<div class="a" style="left:598px;top:528.5px;width:4.5px;height:1.2px;background:#444;"></div>
<div class="a" style="left:605.5px;top:528.6px;width:74px;height:1px;background:#9a9a9a;"></div>
<div class="a" style="left:642.7px;top:526.5px;width:1px;height:5px;background:#9a9a9a;"></div>
<div class="a" style="left:625.5px;top:524.4px;width:3.6px;height:8.8px;background:#555;"></div>
<svg style="left:682.5px;top:526.2px" width="6" height="6" viewBox="0 0 6 6"><path d="M3 0.2v5.6M0.2 3h5.6" stroke="#444" stroke-width="1.1"/></svg>
<span class="t " style="left:696.70px;top:523.72px;font-size:8.8px;line-height:10.56px;color:#333;font-weight:normal;transform:scaleX(0.8630);transform-origin:0 0;">58%</span>
<svg style="left:723px;top:524px" width="10" height="10" viewBox="0 0 10 10"><rect x="0.5" y="0.5" width="9" height="9" fill="none" stroke="#666" stroke-width="0.8"/><path d="M2 2l2 2M8 2L6 4M2 8l2-2M8 8L6 6" stroke="#555" stroke-width="0.9"/></svg>
<svg style="left:742.5px;top:523.5px" width="11" height="11" viewBox="0 0 11 11"><rect x="0.5" y="0.5" width="4.6" height="3.8" fill="none" stroke="#555" stroke-width="0.9"/><rect x="0.5" y="6.4" width="3.6" height="3.6" fill="none" stroke="#555" stroke-width="0.9"/><rect x="6" y="6.4" width="3.6" height="3.6" fill="none" stroke="#555" stroke-width="0.9"/><path d="M6.6 0.6h3.6v3.8M5.2 2.4h2v4" stroke="#555" stroke-width="0.9" fill="none"/></svg>
<div class="a" style="left:194px;top:106px;width:558px;height:375px;background:#eaeaea;overflow:hidden;" id="cv">
<div class="a" style="left:44px;top:34px;width:484px;height:400px;background:#fff;border:1px solid #dcdcdc;box-sizing:border-box;"></div>
<div class="a" style="left:54px;top:44px;width:462.5px;height:400px;border:1px solid #d9d9d9;box-sizing:border-box;"></div>
<svg style="left:0;top:0" width="558" height="375" viewBox="194 106 558 375"><defs><linearGradient id="g1" x1="0" y1="0" x2="0.55" y2="0.9"><stop offset="0" stop-color="#e9edf6"/><stop offset="0.6" stop-color="#ffffff"/></linearGradient></defs><path d="M248 471.4H710.5" stroke="#222" stroke-width="0.9" stroke-dasharray="2.6 1.7"/><path d="M482.4 206V225" stroke="#4573c5" stroke-width="1.05" fill="none"/><path d="M480.3 224.2h4.2l-2.1 4.8z" fill="#4573c5"/><path d="M482.4 265v7.2h-0.7V481" stroke="#4573c5" stroke-width="1.05" fill="none"/><path d="M481.8 306.1H490" stroke="#4573c5" stroke-width="1.05"/><path d="M489.2 304.2v3.8l4.4-1.9z" fill="#4573c5"/><path d="M481.8 360H489.6" stroke="#4573c5" stroke-width="1.05"/><path d="M488.8 358.1v3.8l4.4-1.9z" fill="#4573c5"/><path d="M526.6 378.7v4.6h-1.2V470.6H533" stroke="#4573c5" stroke-width="1.05" fill="none"/><path d="M532.4 468.7v3.8l4.4-1.9z" fill="#4573c5"/><path d="M525.4 418H533" stroke="#4573c5" stroke-width="1.05"/><path d="M532.4 416.1v3.8l4.4-1.9z" fill="#4573c5"/><rect x="449.1" y="170.4" width="66.7" height="35.9" fill="url(#g1)" stroke="#4169ba" stroke-width="1"/><clipPath id="c1"><polygon points="453.40,151.60 470.90,170.30 453.40,189.00 435.90,170.30"/></clipPath><polygon points="453.40,151.60 470.90,170.30 453.40,189.00 435.90,170.30" fill="#fff"/><polygon points="453.40,151.60 470.90,170.30 465.38,176.20 441.42,176.20 435.90,170.30" fill="#a9a9a9"/><g clip-path="url(#c1)"><path d="M439.40 190.00L440.20 177.10Q440.20 171.60 445.70 171.60H461.10Q466.60 171.60 466.60 177.10L467.40 190.00z" fill="#fff"/><ellipse cx="453.4" cy="164.79999999999998" rx="9.0" ry="9.0" fill="#a9a9a9"/></g><ellipse cx="453.4" cy="164.79999999999998" rx="7.4" ry="7.4" fill="#fff"/><text x="486.2" y="184.05" font-family="Liberation Sans, sans-serif" font-size="4.3" font-weight="bold" fill="#5b80c9" text-anchor="start" textLength="22.6" lengthAdjust="spacingAndGlyphs">Steve Webb</text><text x="468.3" y="189.15" font-family="Liberation Sans, sans-serif" font-size="4.3" font-weight="bold" fill="#5b80c9" text-anchor="start" textLength="7.6" lengthAdjust="spacingAndGlyphs">CTO</text><text x="468.3" y="194.95" font-family="Liberation Sans, sans-serif" font-size="4.3" font-weight="bold" fill="#5b80c9" text-anchor="start" textLength="13.7" lengthAdjust="spacingAndGlyphs">London</text><rect x="448.8" y="229.2" width="67" height="36" fill="#3d62af"/><clipPath id="c2"><polygon points="440.60,218.70 466.30,218.70 466.30,244.40 440.60,244.40"/></clipPath><polygon points="440.60,218.70 466.30,218.70 466.30,244.40 440.60,244.40" fill="#a9a9a9"/><g clip-path="url(#c2)"><path d="M443.12 244.90L443.92 236.80Q443.92 233.00 447.72 233.00H458.52Q462.32 233.00 462.32 236.80L463.12 244.90z" fill="#fff"/><ellipse cx="453.1159" cy="227.29999999999998" rx="6.5" ry="7.1" fill="#a9a9a9"/></g><ellipse cx="453.1159" cy="227.29999999999998" rx="5.2" ry="5.8" fill="#fff"/><text x="479.5" y="242.95" font-family="Liberation Sans, sans-serif" font-size="4.3" font-weight="bold" fill="#fff" text-anchor="start" textLength="29.6" lengthAdjust="spacingAndGlyphs">Wendy Parsons</text><text x="468.4" y="248.15" font-family="Liberation Sans, sans-serif" font-size="4.3" font-weight="bold" fill="#fff" text-anchor="start" textLength="33.8" lengthAdjust="spacingAndGlyphs">Software Dev Mgr</text><text x="468.4" y="254.15" font-family="Liberation Sans, sans-serif" font-size="4.3" font-weight="bold" fill="#fff" text-anchor="start" textLength="22.1" lengthAdjust="spacingAndGlyphs">Manchester</text><rect x="493.6" y="288.8" width="66.5" height="35.9" fill="#4472c4"/><clipPath id="c3"><polygon points="484.20,289.88 490.20,279.10 503.50,279.10 509.50,289.88 503.50,301.10 490.20,301.10"/></clipPath><polygon points="484.20,289.88 490.20,279.10 503.50,279.10 509.50,289.88 503.50,301.10 490.20,301.10" fill="#fff"/><polygon points="484.20,289.88 490.20,279.10 503.50,279.10 509.50,289.88 505.86,296.70 487.84,296.70" fill="#a9a9a9"/><g clip-path="url(#c3)"><path d="M486.60 301.60L487.40 297.00Q487.40 292.20 492.20 292.20H500.80Q505.60 292.20 505.60 297.00L506.40 301.60z" fill="#fff"/><ellipse cx="496.4958" cy="286.40000000000003" rx="6.4" ry="6.5" fill="#a9a9a9"/></g><ellipse cx="496.4958" cy="286.40000000000003" rx="5.0" ry="5.1" fill="#fff"/><text x="527.2" y="302.05" font-family="Liberation Sans, sans-serif" font-size="4.3" font-weight="bold" fill="#fff" text-anchor="start" textLength="25.9" lengthAdjust="spacingAndGlyphs">Grace Jackson</text><text x="513.2" y="307.45" font-family="Liberation Sans, sans-serif" font-size="4.3" font-weight="bold" fill="#fff" text-anchor="start" textLength="36.3" lengthAdjust="spacingAndGlyphs">Project Coordinator</text><text x="513.2" y="313.25" font-family="Liberation Sans, sans-serif" font-size="4.3" font-weight="bold" fill="#fff" text-anchor="start" textLength="13.4" lengthAdjust="spacingAndGlyphs">London</text><rect x="493.2" y="342.3" width="66.9" height="36.5" fill="#3d62af"/><clipPath id="c4"><polygon points="485.30,331.80 511.00,331.80 511.00,357.50 485.30,357.50"/></clipPath><polygon points="485.30,331.80 511.00,331.80 511.00,357.50 485.30,357.50" fill="#a9a9a9"/><g clip-path="url(#c4)"><path d="M487.82 358.00L488.62 349.90Q488.62 346.10 492.42 346.10H503.22Q507.02 346.10 507.02 349.90L507.82 358.00z" fill="#fff"/><ellipse cx="497.8159" cy="340.40000000000003" rx="6.5" ry="7.1" fill="#a9a9a9"/></g><ellipse cx="497.8159" cy="340.40000000000003" rx="5.2" ry="5.8" fill="#fff"/><text x="530" y="355.95" font-family="Liberation Sans, sans-serif" font-size="4.3" font-weight="bold" fill="#fff" text-anchor="start" textLength="23.1" lengthAdjust="spacingAndGlyphs">Jenny Grove</text><text x="513.2" y="361.85" font-family="Liberation Sans, sans-serif" font-size="4.3" font-weight="bold" fill="#fff" text-anchor="start" textLength="30.2" lengthAdjust="spacingAndGlyphs">Web Team Lead</text><text x="513.2" y="367.45" font-family="Liberation Sans, sans-serif" font-size="4.3" font-weight="bold" fill="#fff" text-anchor="start" textLength="21.8" lengthAdjust="spacingAndGlyphs">Manchester</text><rect x="536.9" y="400.2" width="67.1" height="35.7" fill="#4472c4"/><clipPath id="c5"><polygon points="528.30,401.58 534.30,390.80 547.60,390.80 553.60,401.58 547.60,412.80 534.30,412.80"/></clipPath><polygon points="528.30,401.58 534.30,390.80 547.60,390.80 553.60,401.58 547.60,412.80 534.30,412.80" fill="#fff"/><polygon points="528.30,401.58 534.30,390.80 547.60,390.80 553.60,401.58 549.96,408.40 531.94,408.40" fill="#a9a9a9"/><g clip-path="url(#c5)"><path d="M530.70 413.30L531.50 408.70Q531.50 403.90 536.30 403.90H544.90Q549.70 403.90 549.70 408.70L550.50 413.30z" fill="#fff"/><ellipse cx="540.5957999999999" cy="398.1" rx="6.4" ry="6.5" fill="#a9a9a9"/></g><ellipse cx="540.5957999999999" cy="398.1" rx="5.0" ry="5.1" fill="#fff"/><text x="576.3" y="414.05" font-family="Liberation Sans, sans-serif" font-size="4.3" font-weight="bold" fill="#fff" text-anchor="start" textLength="20.7" lengthAdjust="spacingAndGlyphs">Kelly Rivers</text><text x="556.8" y="419.55" font-family="Liberation Sans, sans-serif" font-size="4.3" font-weight="bold" fill="#fff" text-anchor="start" textLength="23.7" lengthAdjust="spacingAndGlyphs">Sr Developer</text><text x="556.8" y="424.95" font-family="Liberation Sans, sans-serif" font-size="4.3" font-weight="bold" fill="#fff" text-anchor="start" textLength="22" lengthAdjust="spacingAndGlyphs">Manchester</text><rect x="536.9" y="453.2" width="67.1" height="35.7" fill="#4472c4"/><clipPath id="c6"><polygon points="528.30,454.58 534.30,443.80 547.60,443.80 553.60,454.58 547.60,465.80 534.30,465.80"/></clipPath><polygon points="528.30,454.58 534.30,443.80 547.60,443.80 553.60,454.58 547.60,465.80 534.30,465.80" fill="#fff"/><polygon points="528.30,454.58 534.30,443.80 547.60,443.80 553.60,454.58 549.96,461.40 531.94,461.40" fill="#a9a9a9"/><g clip-path="url(#c6)"><path d="M530.70 466.30L531.50 461.70Q531.50 456.90 536.30 456.90H544.90Q549.70 456.90 549.70 461.70L550.50 466.30z" fill="#fff"/><ellipse cx="540.5957999999999" cy="451.1" rx="6.4" ry="6.5" fill="#a9a9a9"/></g><ellipse cx="540.5957999999999" cy="451.1" rx="5.0" ry="5.1" fill="#fff"/><text x="576.3" y="467.05" font-family="Liberation Sans, sans-serif" font-size="4.3" font-weight="bold" fill="#fff" text-anchor="start" textLength="20.7" lengthAdjust="spacingAndGlyphs">Nick Baxter</text><text x="556.8" y="472.25" font-family="Liberation Sans, sans-serif" font-size="4.3" font-weight="bold" fill="#fff" text-anchor="start" textLength="23.7" lengthAdjust="spacingAndGlyphs">Sr Developer</text><text x="556.8" y="477.95" font-family="Liberation Sans, sans-serif" font-size="4.3" font-weight="bold" fill="#fff" text-anchor="start" textLength="22" lengthAdjust="spacingAndGlyphs">Manchester</text></svg>
<div class="a" style="left:0;top:0;width:558px;height:12.5px;background:#ededed;"></div>
<div class="a" style="left:0;top:0;width:12px;height:375px;background:#ededed;"></div>
<svg style="left:0;top:0" width="558" height="375" viewBox="194 106 558 375"><path d="M194 118.4H752M205.6 106V481" stroke="#bcbcbc" stroke-width="1" fill="none"/><path d="M194.5 112.3h10.5M199.8 106.5v11" stroke="#d9d9d9" stroke-width="0.8"/><path d="M214.09 111.7V118.4M222.23 110.2V118.4M230.37 111.7V118.4M238.50 106.2V118.4M246.63 111.7V118.4M254.77 110.2V118.4M262.90 111.7V118.4M271.04 106.2V118.4M279.18 111.7V118.4M287.31 110.2V118.4M295.44 111.7V118.4M303.58 106.2V118.4M311.72 111.7V118.4M319.85 110.2V118.4M327.99 111.7V118.4M336.12 106.2V118.4M344.25 111.7V118.4M352.39 110.2V118.4M360.52 111.7V118.4M368.66 106.2V118.4M376.79 111.7V118.4M384.93 110.2V118.4M393.06 111.7V118.4M401.20 106.2V118.4M409.34 111.7V118.4M417.47 110.2V118.4M425.61 111.7V118.4M433.74 106.2V118.4M441.88 111.7V118.4M450.01 110.2V118.4M458.14 111.7V118.4M466.28 106.2V118.4M474.41 111.7V118.4M482.55 110.2V118.4M490.69 111.7V118.4M498.82 106.2V118.4M506.95 111.7V118.4M515.09 110.2V118.4M523.23 111.7V118.4M531.36 106.2V118.4M539.50 111.7V118.4M547.63 110.2V118.4M555.76 111.7V118.4M563.90 106.2V118.4M572.04 111.7V118.4M580.17 110.2V118.4M588.31 111.7V118.4M596.44 106.2V118.4M604.58 111.7V118.4M612.71 110.2V118.4M620.85 111.7V118.4M628.98 106.2V118.4M637.12 111.7V118.4M645.25 110.2V118.4M653.38 111.7V118.4M661.52 106.2V118.4M669.65 111.7V118.4M677.79 110.2V118.4M685.92 111.7V118.4M694.06 106.2V118.4M702.19 111.7V118.4M710.33 110.2V118.4M718.46 111.7V118.4M726.60 106.2V118.4M734.74 111.7V118.4M742.87 110.2V118.4M751.00 111.7V118.4" stroke="#b2b2b2" stroke-width="0.9"/><text x="207.26" y="113.8" font-family="Liberation Sans, sans-serif" font-size="7.8" fill="#555" textLength="9.5" lengthAdjust="spacingAndGlyphs">-20</text><text x="239.80" y="113.8" font-family="Liberation Sans, sans-serif" font-size="7.8" fill="#555" textLength="3.6" lengthAdjust="spacingAndGlyphs">0</text><text x="272.34" y="113.8" font-family="Liberation Sans, sans-serif" font-size="7.8" fill="#555" textLength="7.3" lengthAdjust="spacingAndGlyphs">20</text><text x="304.88" y="113.8" font-family="Liberation Sans, sans-serif" font-size="7.8" fill="#555" textLength="7.3" lengthAdjust="spacingAndGlyphs">40</text><text x="337.42" y="113.8" font-family="Liberation Sans, sans-serif" font-size="7.8" fill="#555" textLength="7.3" lengthAdjust="spacingAndGlyphs">60</text><text x="369.96" y="113.8" font-family="Liberation Sans, sans-serif" font-size="7.8" fill="#555" textLength="7.3" lengthAdjust="spacingAndGlyphs">80</text><text x="402.50" y="113.8" font-family="Liberation Sans, sans-serif" font-size="7.8" fill="#555" textLength="10.9" lengthAdjust="spacingAndGlyphs">100</text><text x="435.04" y="113.8" font-family="Liberation Sans, sans-serif" font-size="7.8" fill="#555" textLength="10.9" lengthAdjust="spacingAndGlyphs">120</text><text x="467.58" y="113.8" font-family="Liberation Sans, sans-serif" font-size="7.8" fill="#555" textLength="10.9" lengthAdjust="spacingAndGlyphs">140</text><text x="500.12" y="113.8" font-family="Liberation Sans, sans-serif" font-size="7.8" fill="#555" textLength="10.9" lengthAdjust="spacingAndGlyphs">160</text><text x="532.66" y="113.8" font-family="Liberation Sans, sans-serif" font-size="7.8" fill="#555" textLength="10.9" lengthAdjust="spacingAndGlyphs">180</text><text x="565.20" y="113.8" font-family="Liberation Sans, sans-serif" font-size="7.8" fill="#555" textLength="10.9" lengthAdjust="spacingAndGlyphs">200</text><text x="597.74" y="113.8" font-family="Liberation Sans, sans-serif" font-size="7.8" fill="#555" textLength="10.9" lengthAdjust="spacingAndGlyphs">220</text><text x="630.28" y="113.8" font-family="Liberation Sans, sans-serif" font-size="7.8" fill="#555" textLength="10.9" lengthAdjust="spacingAndGlyphs">240</text><text x="662.82" y="113.8" font-family="Liberation Sans, sans-serif" font-size="7.8" fill="#555" textLength="10.9" lengthAdjust="spacingAndGlyphs">260</text><text x="695.36" y="113.8" font-family="Liberation Sans, sans-serif" font-size="7.8" fill="#555" textLength="10.9" lengthAdjust="spacingAndGlyphs">280</text><text x="727.90" y="113.8" font-family="Liberation Sans, sans-serif" font-size="7.8" fill="#555" textLength="10.9" lengthAdjust="spacingAndGlyphs">300</text><path d="M197.4 120.83H205.6M199.4 128.97H205.6M194 137.10H205.6M199.4 145.23H205.6M197.4 153.37H205.6M199.4 161.50H205.6M194 169.64H205.6M199.4 177.77H205.6M197.4 185.91H205.6M199.4 194.04H205.6M194 202.18H205.6M199.4 210.31H205.6M197.4 218.45H205.6M199.4 226.58H205.6M194 234.72H205.6M199.4 242.85H205.6M197.4 250.99H205.6M199.4 259.12H205.6M194 267.26H205.6M199.4 275.39H205.6M197.4 283.53H205.6M199.4 291.66H205.6M194 299.80H205.6M199.4 307.94H205.6M197.4 316.07H205.6M199.4 324.20H205.6M194 332.34H205.6M199.4 340.48H205.6M197.4 348.61H205.6M199.4 356.75H205.6M194 364.88H205.6M199.4 373.01H205.6M197.4 381.15H205.6M199.4 389.28H205.6M194 397.42H205.6M199.4 405.55H205.6M197.4 413.69H205.6M199.4 421.83H205.6M194 429.96H205.6M199.4 438.10H205.6M197.4 446.23H205.6M199.4 454.37H205.6M194 462.50H205.6M199.4 470.63H205.6M197.4 478.77H205.6" stroke="#b2b2b2" stroke-width="0.9"/><text transform="translate(200.4 152.30) rotate(-90)" font-family="Liberation Sans, sans-serif" font-size="7.8" fill="#555" textLength="13.2" lengthAdjust="spacingAndGlyphs">-380</text><text transform="translate(200.4 184.84) rotate(-90)" font-family="Liberation Sans, sans-serif" font-size="7.8" fill="#555" textLength="13.2" lengthAdjust="spacingAndGlyphs">-400</text><text transform="translate(200.4 217.38) rotate(-90)" font-family="Liberation Sans, sans-serif" font-size="7.8" fill="#555" textLength="13.2" lengthAdjust="spacingAndGlyphs">-420</text><text transform="translate(200.4 249.92) rotate(-90)" font-family="Liberation Sans, sans-serif" font-size="7.8" fill="#555" textLength="13.2" lengthAdjust="spacingAndGlyphs">-440</text><text transform="translate(200.4 282.46) rotate(-90)" font-family="Liberation Sans, sans-serif" font-size="7.8" fill="#555" textLength="13.2" lengthAdjust="spacingAndGlyphs">-460</text><text transform="translate(200.4 315.00) rotate(-90)" font-family="Liberation Sans, sans-serif" font-size="7.8" fill="#555" textLength="13.2" lengthAdjust="spacingAndGlyphs">-480</text><text transform="translate(200.4 347.54) rotate(-90)" font-family="Liberation Sans, sans-serif" font-size="7.8" fill="#555" textLength="13.2" lengthAdjust="spacingAndGlyphs">-500</text><text transform="translate(200.4 380.08) rotate(-90)" font-family="Liberation Sans, sans-serif" font-size="7.8" fill="#555" textLength="13.2" lengthAdjust="spacingAndGlyphs">-520</text><text transform="translate(200.4 412.62) rotate(-90)" font-family="Liberation Sans, sans-serif" font-size="7.8" fill="#555" textLength="13.2" lengthAdjust="spacingAndGlyphs">-540</text><text transform="translate(200.4 445.16) rotate(-90)" font-family="Liberation Sans, sans-serif" font-size="7.8" fill="#555" textLength="13.2" lengthAdjust="spacingAndGlyphs">-560</text><text transform="translate(200.4 477.70) rotate(-90)" font-family="Liberation Sans, sans-serif" font-size="7.8" fill="#555" textLength="13.2" lengthAdjust="spacingAndGlyphs">-580</text></svg>
</div>
<div class="a" style="left:752.6px;top:108px;width:10.8px;height:370.5px;background:#dadada;"></div>
<div class="a" style="left:752.4px;top:108px;width:11.2px;height:10.5px;background:#fff;box-sizing:border-box;border:1px solid #d0d0d0;"></div>
<svg style="left:755.6px;top:112px" width="5" height="3"><path d="M0 2.8h4.8L2.4 0.2z" fill="#555"/></svg>
<div class="a" style="left:752.4px;top:467.5px;width:11.2px;height:11px;background:#fff;box-sizing:border-box;border:1px solid #d0d0d0;"></div>
<svg style="left:755.8px;top:472px" width="5" height="3"><path d="M0 0.2h4.8L2.4 2.8z" fill="#555"/></svg>
<div class="a" style="left:752.8px;top:219px;width:10.4px;height:57.5px;background:#fff;box-sizing:border-box;border:1px solid #d0d0d0;"></div>
<div class="a" style="left:195.4px;top:480.8px;width:554.7px;height:10.8px;background:#dadada;"></div>
<div class="a" style="left:195.4px;top:481.2px;width:10.6px;height:10.4px;background:#fff;box-sizing:border-box;border:1px solid #d0d0d0;"></div>
<svg style="left:198.8px;top:483.8px" width="4" height="6"><path d="M3.4 0.2v5L0.2 2.7z" fill="#555"/></svg>
<div class="a" style="left:739.3px;top:481.2px;width:10.8px;height:10.4px;background:#fff;box-sizing:border-box;border:1px solid #d0d0d0;"></div>
<svg style="left:743.4px;top:483.8px" width="4" height="6"><path d="M0.2 0.2v5L3.4 2.7z" fill="#555"/></svg>
<div class="a" style="left:363.6px;top:481.2px;width:216px;height:10.4px;background:#fff;box-sizing:border-box;border:1px solid #d0d0d0;"></div>
<span class="t " style="left:205.00px;top:501.36px;font-size:9.4px;line-height:11.28px;color:#3b5aad;font-weight:bold;-webkit-text-stroke:0;transform:scaleX(0.9084);transform-origin:0 0;">Page-1</span>
<span class="t " style="left:256.00px;top:501.36px;font-size:9.4px;line-height:11.28px;color:#444;font-weight:normal;transform:scaleX(0.9572);transform-origin:0 0;">All</span>
<svg style="left:269.5px;top:505px" width="6" height="4"><path d="M0 3.6h5.6L2.8 0z" fill="#3955a3"/></svg>
<svg style="left:295px;top:501px" width="11.6" height="11.6" viewBox="0 0 11 11"><circle cx="5.5" cy="5.5" r="4.8" fill="none" stroke="#3955a3" stroke-width="0.9"/><path d="M5.5 2.8v5.4M2.8 5.5h5.4" stroke="#3955a3" stroke-width="1.2"/></svg>
<div class="a" style="left:245px;top:499px;width:1px;height:16px;background:#e0e0e0;"></div>
<div class="a" style="left:286.5px;top:499px;width:1px;height:16px;background:#e0e0e0;"></div>
</div></body></html>
